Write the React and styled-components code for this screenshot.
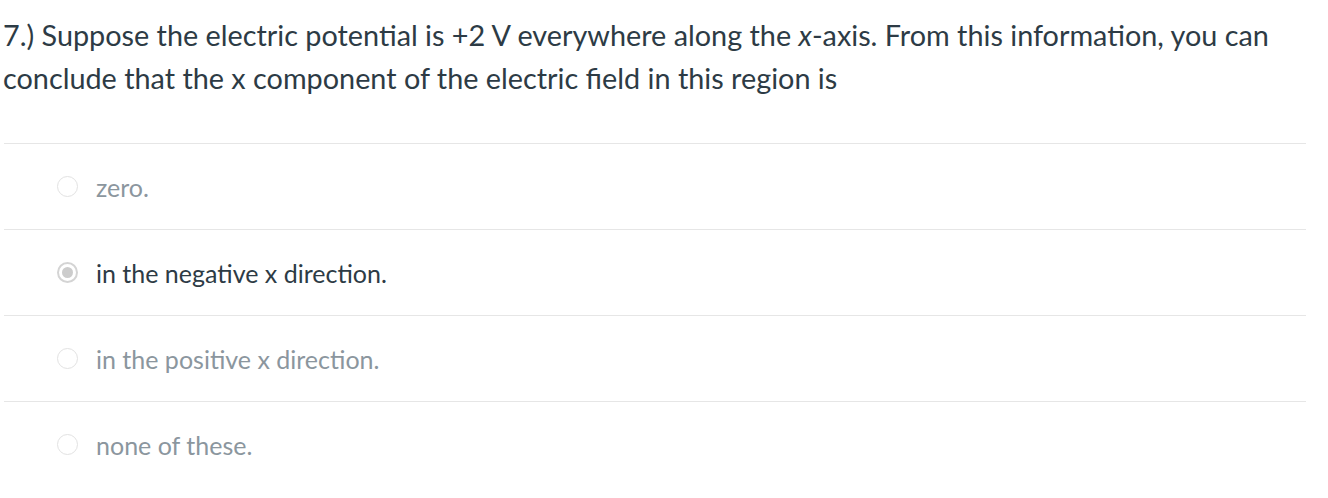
import React from 'react';
import styled, { createGlobalStyle } from 'styled-components';

const GlobalStyle = createGlobalStyle`
  body {
    margin: 0;
    background: #fff;
    font-family: Lato, "Open Sans", sans-serif;
  }
`;

const Wrapper = styled.div`
  width: 1328px;
  height: 498px;
  overflow: hidden;
  background: #fff;
`;

const Question = styled.div`
  padding: 14px 0 0 3px;
  font-size: 28.8px;
  line-height: 43px;
  color: #2d3b45;
  height: 143px;
  box-sizing: border-box;
`;

const Answers = styled.div`
  margin: 0 22px 0 4px;
`;

const Answer = styled.div`
  display: flex;
  align-items: center;
  height: 86px;
  border-top: 1px solid #e6e6e6;
  padding-left: 53px;
  box-sizing: border-box;
`;

const Radio = styled.span`
  width: 21px;
  height: 21px;
  border-radius: 50%;
  box-sizing: border-box;
  border: ${({ checked }) => (checked ? '2px solid #d4d4d4' : '1px solid #e2e2e2')};
  background: #fff;
  display: flex;
  align-items: center;
  justify-content: center;
  margin-right: 18px;

  &::after {
    content: '';
    display: ${({ checked }) => (checked ? 'block' : 'none')};
    width: 11px;
    height: 11px;
    border-radius: 50%;
    background: #cccccc;
  }
`;

const Label = styled.span`
  font-size: 25px;
  color: ${({ checked }) => (checked ? '#2d3b45' : '#8b969e')};
`;

const answers = [
  { text: 'zero.' },
  { text: 'in the negative x direction.', checked: true },
  { text: 'in the positive x direction.' },
  { text: 'none of these.' }
];

const App = () => (
  <Wrapper>
    <GlobalStyle />
    <Question>
      7.) Suppose the electric potential is +2 V everywhere along the <i>x</i>-axis. From this information, you can
      conclude that the x component of the electric field in this region is
    </Question>
    <Answers>
      {answers.map(a => (
        <Answer key={a.text}>
          <Radio checked={a.checked} />
          <Label checked={a.checked}>{a.text}</Label>
        </Answer>
      ))}
    </Answers>
  </Wrapper>
);

export default App;
